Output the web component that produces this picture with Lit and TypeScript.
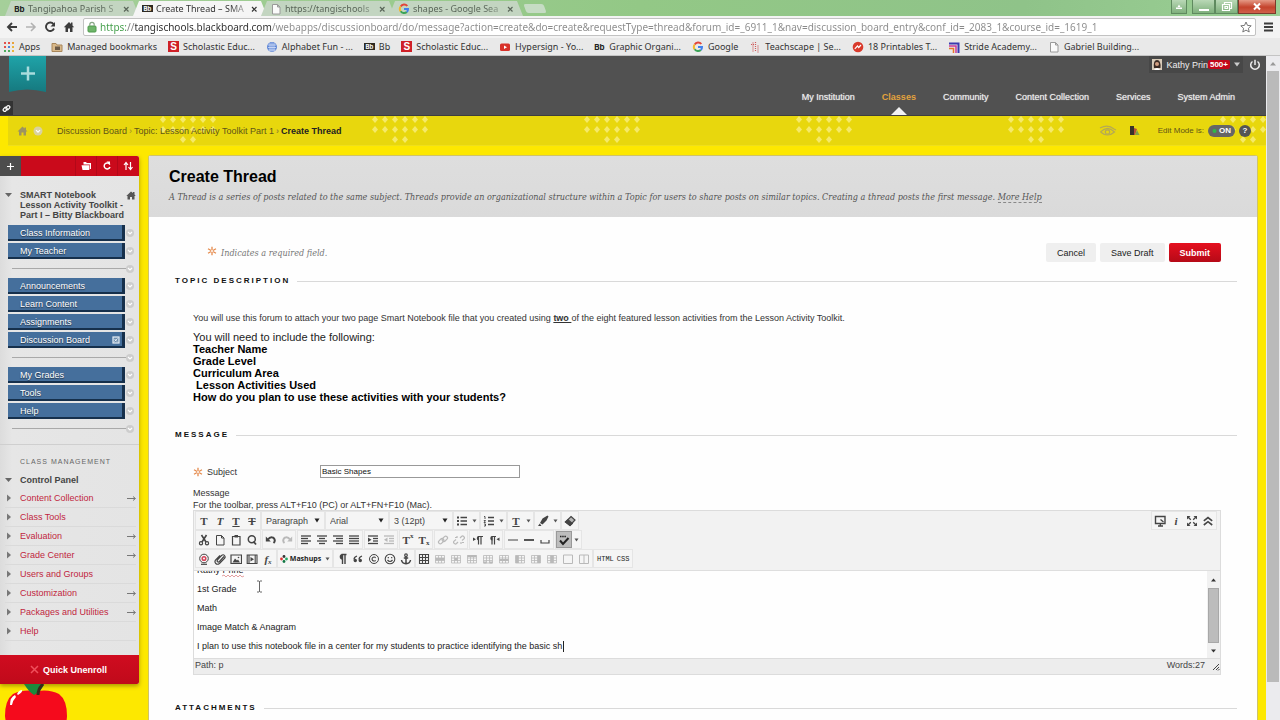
import { LitElement, html, css, svg, nothing, TemplateResult, SVGTemplateResult } from "lit";
import { customElement, property } from "lit/decorators.js";
import { classMap } from "lit/directives/class-map.js";

const S = (w: number, h: number, body: SVGTemplateResult) =>
  html`<svg width=${w} height=${h} viewBox="0 0 ${w} ${h}" fill="none" stroke="currentColor" stroke-width="1.2" aria-hidden="true">${body}</svg>`;

const lines = (rows: number[][]) =>
  svg`${rows.map((r) => svg`<path d="M${r[0]} ${r[2]}H${r[1]}" stroke-width="1.3"/>`)}`;

const page = svg`<path d="M2.5 1.5h5l2.500 2.500v7h-7.500zM7.500 1.500v2.500h2.500" stroke-width="1"/>`;
const googleG = svg`<g stroke-width="2"><path d="M9.300 3A4 4 0 0 0 2.700 3.500" stroke="#e2453a"/><path d="M2.700 3.500A4 4 0 0 0 2.700 8.300" stroke="#f4b72a"/><path d="M2.700 8.300A4 4 0 0 0 8.800 9" stroke="#3ba457"/><path d="M8.800 9A4 4 0 0 0 10 6H6" stroke="#4180ec"/></g>`;
const cells = (mark: SVGTemplateResult) =>
  svg`<g stroke-width=".8"><path d="M1.500 2.500h9v7.500h-9zM1.500 5h9M1.500 7.500h9M4.500 2.500v7.500M7.500 2.500v7.500"/></g>${mark}`;

const ICONS: Record<string, SVGTemplateResult> = {
  cut: svg`<path d="M3.500 1L8 8M8.500 1L4 8" stroke-width="1.600"/><circle cx="3" cy="9.300" r="1.600"/><circle cx="9" cy="9.300" r="1.600"/>`,
  copy: page,
  paste: svg`<path d="M2.500 2.500h7.500v8.500h-7.500z"/><path d="M4.500 1h3.500v2.500h-3.500z" fill="currentColor" stroke="none"/>`,
  find: svg`<circle cx="5.800" cy="5.300" r="3.500" stroke-width="1.500"/><path d="M7.500 7.500l2.500 3" stroke-width="1.800"/>`,
  undo: svg`<path d="M3 5.500C5 2.500 9.500 2.500 9.800 6.500Q9.800 8 8.500 9" stroke-width="2"/><path d="M.8 2.500v5h5z" fill="currentColor" stroke="none"/>`,
  redo: svg`<path d="M9 5.500C7 2.500 2.500 2.500 2.200 6.500Q2.200 8 3.500 9" stroke-width="2"/><path d="M11.200 2.500v5h-5z" fill="currentColor" stroke="none"/>`,
  left: lines([[1, 11, 2], [1, 8, 4.5], [1, 11, 7], [1, 8, 9.5]]),
  center: lines([[1, 11, 2], [3, 9, 4.5], [1, 11, 7], [3, 9, 9.5]]),
  right: lines([[1, 11, 2], [4, 11, 4.5], [1, 11, 7], [4, 11, 9.5]]),
  justify: lines([[1, 11, 2], [1, 11, 4.5], [1, 11, 7], [1, 11, 9.5]]),
  indent: svg`${lines([[1, 11, 2], [6, 11, 4.5], [6, 11, 7], [1, 11, 9.5]])}<path d="M1 3.500l3.500 2.200L1 8z" fill="currentColor" stroke="none"/>`,
  outdent: svg`${lines([[1, 11, 2], [6, 11, 4.5], [6, 11, 7], [1, 11, 9.5]])}<path d="M4.500 3.500L1 5.700 4.500 8z" fill="currentColor" stroke="none"/>`,
  link: svg`<rect x="1" y="5.500" width="6" height="3.500" rx="1.700" transform="rotate(-45 4 7)"/><rect x="5" y="3" width="6" height="3.500" rx="1.700" transform="rotate(-45 8 5)"/>`,
  unlink: svg`<path d="M5 8l-1.500 1.500a1.700 1.700 0 0 1-2.400-2.400L3 5.500M7 4l1.500-1.500a1.700 1.700 0 0 1 2.400 2.400L9 6.500M4 2v2M2 3.500h1.500M8 8v2M9 8.500h2"/>`,
  ltr: svg`<path d="M6.500 10.500v-8M9 10.500v-8M6 2.500h5"/><path d="M7 2a2.200 2.200 0 0 0 0 4.500zM1 3.500L4 5.300 1 7z" fill="currentColor" stroke="none"/>`,
  rtl: svg`<path d="M4 10.500v-8M6.500 10.500v-8M3.500 2.500h4.500"/><path d="M4.500 2a2.200 2.200 0 0 0 0 4.500zM11.500 3.500L8.500 5.300l3 1.700z" fill="currentColor" stroke="none"/>`,
  rule: svg`<path d="M1 6h10" stroke-width="1"/>`,
  thickrule: svg`<path d="M1 6h10" stroke-width="1.800"/>`,
  nbsp: svg`<path d="M2 6v3h8v-3"/>`,
  spell: svg`<path d="M2 6.500l3 3.500 5.500-6" stroke-width="2"/><path d="M2 2.500h6" stroke-width="1.500" stroke-dasharray="1.500 .7"/>`,
  ul: svg`<path d="M4.500 2.500H11M4.500 6H11M4.500 9.500H11" stroke-width="1.300"/><path d="M1 2.500h2M1 6h2M1 9.500h2" stroke-width="1.800"/>`,
  ol: svg`<path d="M5 2.500h6M5 6h6M5 9.500h6" stroke-width="1.300"/><path d="M1 1.500h1v2.500M.8 5.500h1.700L1 7.500h1.700M1 9h1.500v2H1" stroke-width=".9"/>`,
  marker: svg`<path d="M10.500 0.500L5.500 3.500l-2.500 4.500 2.500 1.500 4-4 2-4zM2.800 8.500L1 11h3.500z" fill="currentColor" stroke="none"/>`,
  eraser: svg`<path d="M7 1.500l4 3.500-5 5.500-4.500-3.500z" fill="currentColor" fill-opacity=".35"/><path d="M4 4.800l4.300 3.600L6 10.500 1.500 7z" fill="currentColor"/>`,
  webcam: svg`<circle cx="6" cy="5.500" r="4.300" stroke-width="1"/><circle cx="6" cy="5.500" r="1.800" stroke="#d6455a" stroke-width="1.500"/><path d="M3 11.300h6"/>`,
  clip: svg`<path d="M10 3.500L5.500 8.500q-1.200 1-2 .2t.2-2L7.500 2.500q1.800-1.500 3 0t0 2.800L5.500 10.500q-2.200 1.500-3.700 0t-.3-3.300L6 2.500"/>`,
  image: svg`<path d="M1 2h10.500v8.500H1z"/><path d="M2.500 9.500l2.500-4 2 2 1-1 2 3z" fill="currentColor" stroke="none"/><circle cx="8.500" cy="4.500" r=".8" fill="currentColor" stroke="none"/>`,
  media: svg`<path d="M1.200 2h9.800v8.500H1.200zM3 2v8.500M9.200 2v8.500" stroke-width="1.100"/><path d="M4.500 4l3.500 2.200-3.500 2.200z" fill="currentColor" stroke="none"/>`,
  pilcrow: svg`<path d="M6.500 11V1.500M9 11V1.500M5.500 1.500h5" stroke-width="1.400"/><path d="M6.500 1a2.800 2.800 0 0 0 0 5.600z" fill="currentColor" stroke="none"/>`,
  quote: svg`<path d="M5 3Q2 4 2 6.500M10 3Q7 4 7 6.500" stroke-width="1.300"/><circle cx="3.300" cy="7.500" r="1.700" fill="currentColor" stroke="none"/><circle cx="8.300" cy="7.500" r="1.700" fill="currentColor" stroke="none"/>`,
  copyright: svg`<circle cx="6" cy="6" r="4.500" stroke-width="1"/><path d="M7.600 4.800a2 2 0 1 0 0 2.500" stroke-width="1.100"/>`,
  smile: svg`<circle cx="6" cy="6" r="4.800" stroke-width="1.100"/><path d="M3.500 7q2.500 3 5 0M4.300 4v1.300M7.700 4v1.300"/>`,
  anchor: svg`<circle cx="6" cy="2.200" r="1.300"/><path d="M6 3.500v7M3.800 5h4.400M1.500 7q.5 3.500 4.500 3.700 4-.2 4.500-3.700" stroke-width="1.500"/>`,
  table: svg`<path d="M1.500 1.500h9v9h-9zM1.500 4.500h9M1.500 7.500h9M4.500 1.500v9M7.500 1.500v9" stroke-width="1.100"/>`,
  t1: cells(svg`<path d="M1.500 6.200h9" stroke-width="2.500"/>`),
  t2: cells(svg`<path d="M4.500 6.200h3" stroke-width="2.500"/>`),
  t3: cells(svg`<path d="M1.500 3h9" stroke-width="2"/>`),
  t4: cells(svg`<path d="M1.500 9.500h3m3 0h3" stroke-width="2"/>`),
  t5: cells(svg`<path d="M1.500 7h9" stroke-width="2"/>`),
  t6: cells(svg`<path d="M3 2.500v7.500" stroke-width="2.500"/>`),
  t7: cells(svg`<path d="M9 2.500v7.500" stroke-width="2.500"/>`),
  t8: cells(svg`<path d="M6 2.500v7.500" stroke-width="2.500"/>`),
  t9: svg`<path d="M1.500 2h9v8.500h-9z" stroke-width="1"/>`,
  t10: svg`<path d="M1.500 2h9v8.500h-9zM6 2v8.500" stroke-width="1"/>`,
  preview: svg`<path d="M1.500 1.500h9.500v7H1.500z" stroke-width="1.400"/><path d="M4 11h5M6.300 8.500v2.500M6.500 4.500l3 2.500" stroke-width="1.300"/>`,
  full: svg`<path d="M4.800 4.800L2 2M7.200 4.800L10 2M4.800 7.200L2 10M7.200 7.200L10 10" stroke-width="1.300"/><path d="M1 1h3.500L1 4.500zM11 1v3.500L7.500 1zM1 11V7.500L4.500 11zM11 11H7.500L11 7.500z" fill="currentColor" stroke="none"/>`,
  collapse: svg`<path d="M1.800 5.800L6 2.500l4.200 3.300M1.800 10L6 6.700 10.200 10" stroke-width="1.600"/>`,
};
const icon = (n: string) => S(12, 12, ICONS[n]);
const caret = html`<svg width="5" height="4" viewBox="0 0 5 4" aria-hidden="true"><path d="M.5.500h4L2.500 3.500z" fill="#555"/></svg>`;

const FAV: Record<string, TemplateResult> = {
  bb: html`<b class="bb">Bb</b>`,
  bbox: html`<b class="bbox">Bb</b>`,
  page: S(12, 12, svg`<g stroke="#9a9a9a" fill="#fafafa">${page}</g>`),
  g: S(12, 12, googleG),
  apps: S(12, 12, svg`<g stroke="none">${[0, 1, 2].map((r) => [0, 1, 2].map((c) => svg`<rect x=${1 + c * 4} y=${1 + r * 4} width="2" height="2" fill=${["#e2504a", "#e2504a", "#e8a23a", "#e2504a", "#4a84d8", "#e8b53a", "#4cab5c", "#4cab5c", "#e8b53a"][r * 3 + c]}/>`))}</g>`),
  folder: S(12, 12, svg`<path d="M1 2.500h4l1 1.500h5v6.500H1z" fill="#d9b98a" stroke="#a8865a" stroke-width="1"/><rect x="4" y="5.500" width="5" height="3.500" fill="#6b5a48" stroke="none"/>`),
  s: html`<b class="sch">S</b>`,
  globe: S(12, 12, svg`<circle cx="6" cy="6" r="5" fill="#5e86d6" stroke="none"/><path d="M2 4h8M2 6.500h8M2.500 9h7M4 2v8M6 1.500v9M8 2v8" stroke="#dfe8fa" stroke-width=".7"/>`),
  tube: S(12, 12, svg`<rect x="1" y="2.500" width="10" height="7.500" rx="1.500" fill="#d8322a" stroke="none"/><path d="M5 4.500l3 1.700L5 8z" fill="#fff" stroke="none"/>`),
  teach: S(12, 12, svg`<g stroke="#d05a5a" stroke-width="1.200" stroke-dasharray="1 1"><path d="M2 3.500h5M4 1.500v10M6.500 1v10M9 4.500v7"/></g>`),
  print: S(12, 12, svg`<circle cx="6" cy="6" r="5.300" fill="#d93a2c" stroke="none"/><path d="M2.800 7.800L5.500 5l1.200 1.500L9 4" stroke="#fff"/>`),
  stride: S(12, 12, svg`<path d="M1 2.500h9.500V12" stroke="#3a3ab0" stroke-width="2"/><path d="M1 5h7v7" stroke="#c83a9a" stroke-width="1.500"/><path d="M1 7.500h4.500V12" stroke="#e8772a" stroke-width="1.500"/>`),
};

type Tab = { fav: string; label: string; active?: boolean };

@customElement("browser-chrome")
class BrowserChrome extends LitElement {
  static styles = css`
    :host { display: block; font: 10px/12px "Noto Sans", "Open Sans", sans-serif; color: #3c3c3c; }
    button { font: inherit; color: inherit; border: 0; background: none; padding: 0; display: flex; align-items: center; justify-content: center; }
    svg { flex: none; display: block; }
    .strip { display: flex; height: 16px; background: linear-gradient(90deg, #a5cf9a, #93c886 50%, #8fc389 80%, #9bcf95); padding-left: 5px; font-size: 9px; }
    .tabs { display: flex; flex: 1; }
    .tab { display: flex; align-items: center; width: 134px; margin-right: -6px; padding: 1px 9px 0 9px; gap: 3px; background: #c3d5c1; color: #5a6659; clip-path: polygon(0 100%, 6px 1px, calc(100% - 6px) 1px, 100% 100%); box-sizing: border-box; }
    .tab.active { background: #f5f5f5; color: #333; position: relative; }
    .tab span { flex: 1; white-space: nowrap; text-align: left; mask-image: linear-gradient(90deg, #000 80%, rgba(0, 0, 0, .3)); }
    .newtab { width: 20px; height: 9px; margin: 4px 0 0 8px; background: #c6dcc4; border-radius: 2px; transform: skewX(20deg); }
    .wins { display: flex; height: 14px; gap: 0; margin-right: 4px; color: #fff; }
    .wins button { width: 23px; border: 1px solid #5f8a5f; border-top: 0; box-sizing: border-box; background: linear-gradient(#b9d8b6, #7fb07c); }
    .wins .user { width: 16px; margin-right: 5px; }
    .wins .close { width: 38px; background: linear-gradient(#e59a86, #c4432c 55%, #d0604a); border-color: #7c3a2c; }
    .bar { display: flex; align-items: center; height: 22px; background: #f3f3f3; padding: 0 5px; gap: 6px; }
    .bar button { width: 13px; height: 14px; }
    .dim { opacity: .35; }
    .omni { display: flex; flex: 1; align-items: center; height: 18px; box-sizing: border-box; border: 1px solid #c2c2c2; border-radius: 2px; background: #fff; padding: 0 3px; gap: 3px; margin-left: 2px; }
    .omni input { flex: 1; min-width: 0; border: 0; outline: 0; padding: 0; height: 15px; font: inherit; color: transparent; background: linear-gradient(90deg, #3f9c46 0 26px, #777 26px 35px, #2b2b2b 35px 172px, #8a8a8a 172px); -webkit-background-clip: text; background-clip: text; }
    .marks { display: flex; align-items: center; height: 18px; box-sizing: border-box; background: #e9e9e9; border-bottom: 1px solid #c4c4c4; padding-left: 3px; gap: 11px; font-size: 9px; }
    .marks a { display: flex; align-items: center; gap: 4px; color: #333; text-decoration: none; white-space: nowrap; }
    .bb { font: 700 8px/12px "Inter", sans-serif; color: #222; width: 11px; }
    .bbox { font: 700 6px/7px "Inter", sans-serif; color: #fff; background: #2e2a22; padding: 0 1px; width: 9px; text-align: center; }
    .sch { font: 700 10px/11px "Liberation Sans", sans-serif; color: #fff; background: #cf2027; width: 11px; text-align: center; }
  `;
  tabs: Tab[] = [
    { fav: "bb", label: "Tangipahoa Parish S" },
    { fav: "bbox", label: "Create Thread – SMA", active: true },
    { fav: "page", label: "https://tangischools" },
    { fav: "g", label: "shapes - Google Sea" },
  ];
  marks = [
    ["apps", "Apps"], ["folder", "Managed bookmarks"], ["s", "Scholastic Educ..."], ["globe", "Alphabet Fun - ..."], ["bbox", "Bb"],
    ["s", "Scholastic Educ..."], ["tube", "Hypersign - Yo..."], ["bb", "Graphic Organi..."], ["g", "Google"], ["teach", "Teachscape | Se..."],
    ["print", "18 Printables T..."], ["stride", "Stride Academy..."], ["page", "Gabriel Building..."],
  ];
  render() {
    return html`
      <div class="strip">
        <div class="tabs">
          ${this.tabs.map((t) => html`<button class=${classMap({ tab: true, active: !!t.active })}>${FAV[t.fav]}<span>${t.label}</span>${S(8, 8, svg`<path d="M2 2l4.500 4.500M6.500 2L2 6.500"/>`)}</button>`)}
          <button class="newtab" aria-label="New tab"></button>
        </div>
        <div class="wins">
          <button class="user" aria-label="User">${S(8, 8, svg`<path d="M2.500 4L4 1.500 5.500 4zM1 4.500h6v1.500H1z" fill="#fff" stroke="none"/>`)}</button>
          <button aria-label="Minimize">${S(12, 10, svg`<path d="M1 8h10" stroke-width="2"/>`)}</button>
          <button aria-label="Restore">${S(12, 11, svg`<path d="M3.500 3V1.500h7v6H9M1.500 3.500h7v6h-7zM4 5.500h2.500v2H4z"/>`)}</button>
          <button class="close" aria-label="Close">${S(10, 9, svg`<path d="M2 1.500l6 6M8 1.500l-6 6" stroke-width="2"/>`)}</button>
        </div>
      </div>
      <div class="bar">
        <button aria-label="Back">${S(12, 12, svg`<path d="M11 6H2M6 2L2 6l4 4" stroke-width="1.900"/>`)}</button>
        <button class="dim" aria-label="Forward">${S(12, 12, svg`<path d="M1 6h9M6 2l4 4-4 4" stroke-width="1.600"/>`)}</button>
        <button aria-label="Reload">${S(12, 12, svg`<path d="M9.500 3.200A4.200 4.200 0 1 0 10 7.500" stroke-width="1.900"/><path d="M11 1v4.500H6.500z" fill="currentColor" stroke="none"/>`)}</button>
        <button aria-label="Home">${S(12, 12, svg`<path d="M6 1L.8 6.300h1.700V11h2.500V7.500h2V11h2.500V6.300h1.700L9.500 4.500V1.500H8v1.500z" fill="currentColor" stroke="none"/>`)}</button>
        <div class="omni">
          ${S(10, 12, svg`<rect x="1" y="5" width="8" height="6" rx="1" fill="#6fb56a" stroke="#4f9a4c" stroke-width="1"/><path d="M2.800 5V3.500a2.200 2.200 0 0 1 4.400 0V5" stroke="#8aa888"/>`)}
          <input aria-label="Address" .value=${"https://tangischools.blackboard.com/webapps/discussionboard/do/message?action=create&do=create&requestType=thread&forum_id=_6911_1&nav=discussion_board_entry&conf_id=_2083_1&course_id=_1619_1"} />
          ${S(12, 12, svg`<path d="M6 1l1.500 3.400 3.700.4-2.800 2.500.8 3.700L6 9.100 2.800 11l.8-3.700L.8 4.800l3.700-.4z" stroke="#777" stroke-width="1"/>`)}
        </div>
        <button aria-label="Menu">${S(11, 12, svg`<path d="M1 2.500h9M1 6h9M1 9.500h9" stroke-width="2"/>`)}</button>
      </div>
      <nav class="marks">${this.marks.map(([f, l]) => html`<a href="#">${FAV[f]}${l}</a>`)}</nav>
    `;
  }
}

@customElement("course-menu")
class CourseMenu extends LitElement {
  static styles = css`
    :host { display: flex; flex-direction: column; background: linear-gradient(90deg, #dcdcdc, #e6e6e6 12px, #e4e4e4); box-shadow: 0 2px 4px rgba(90, 70, 0, .5); border-radius: 0 2px 2px 0; overflow: hidden; font: 9px/10px "Liberation Sans", sans-serif; }
    button { font: inherit; color: inherit; border: 0; background: none; padding: 0; display: flex; align-items: center; justify-content: center; }
    svg { display: block; flex: none; }
    a { text-decoration: none; color: inherit; }
    .top { display: flex; height: 20px; background: #ca0a1b; color: #fff; padding-right: 1px; }
    .top button { width: 21px; border-left: 1px solid #b30818; }
    .top .add { background: #4d4d4d; border: 0; margin-right: auto; }
    .title { display: flex; align-items: flex-start; padding: 14px 3px 5px 5px; gap: 6px; color: #444; }
    .title h2 { flex: 1; margin: 0; font: 700 9px/10px "Liberation Sans", sans-serif; padding-left: 2px; white-space: nowrap; }
    .title svg { margin-top: 1px; }
    .title svg:last-child { margin-left: -10px; }
    .list { display: flex; flex-direction: column; gap: 2px; padding: 0 5px 0 8px; }
    .row { display: flex; align-items: center; justify-content: space-between; height: 16px; }
    .row a { display: flex; align-items: center; justify-content: space-between; width: 117px; height: 16px; box-sizing: border-box; background: #456f9c; border: solid #16304c; border-width: 0 3px 2px 0; color: #fff; padding: 1px 2px 0 12px; text-shadow: 0 1px 1px #234; }
    .row.div { height: 15px; }
    .row.div hr { flex: 1; border: 0; border-top: 1px solid #a9a9a9; margin: 0 0 0 4px; }
    .row button { width: 8px; height: 8px; border-radius: 4px; background: #cdcdcd; color: #fff; }
    .mgmt { margin-top: 8px; border-top: 1px solid #cfcfcf; padding: 12px 3px 0 5px; }
    .mgmt h3 { margin: 0 0 0 15px; font: 7px/10px "Liberation Sans", sans-serif; letter-spacing: 1px; color: #666; white-space: nowrap; }
    .item { display: flex; align-items: center; height: 18px; border-bottom: 1px solid #dadada; color: #c11f40; gap: 8px; }
    .item a { flex: 1; }
    .item.head { color: #444; font-weight: 700; border: 0; margin-top: 4px; }
    .quit { margin-top: 14px; height: 29px; background: linear-gradient(#d00c20, #c00a1a); color: #fff; font-weight: 700; gap: 4px; padding-right: 2px; }
  `;
  groups = [["Class Information", "My Teacher"], ["Announcements", "Learn Content", "Assignments", "Discussion Board"], ["My Grades", "Tools", "Help"]];
  items: [string, boolean][] = [["Content Collection", true], ["Class Tools", false], ["Evaluation", true], ["Grade Center", true], ["Users and Groups", false], ["Customization", true], ["Packages and Utilities", true], ["Help", false]];
  render() {
    const more = html`<button aria-label="Options">${S(8, 8, svg`<path d="M2 3l2 2 2-2"/>`)}</button>`;
    const down = S(7, 8, svg`<path d="M0 2h7L3.500 6z" fill="#666" stroke="none"/>`);
    return html`
      <div class="top">
        <button class="add" aria-label="Add">${S(9, 9, svg`<path d="M1 4.500h7M4.500 1v7"/>`)}</button>
        <button aria-label="Folder view">${S(11, 10, svg`<path d="M2.500 1h2.500l.800 1H10v6H8.800V3.500H2.500z" fill="currentColor" stroke="none"/><path d="M.5 4.200h7.800v4.800H1.500z" fill="currentColor" stroke="none"/>`)}</button>
        <button aria-label="Refresh">${S(10, 10, svg`<path d="M7.800 3.500A3 3 0 1 0 8 6" stroke-width="1.500"/><path d="M4.500.500h3.500v3.500z" fill="currentColor" stroke="none"/>`)}</button>
        <button aria-label="Reorder">${S(10, 10, svg`<path d="M3 9V2M1 4l2-2.500L5 4M7.500 1v7M5.500 6l2 2.500 2-2.500"/>`)}</button>
      </div>
      <div class="title">${down}<h2>SMART Notebook<br />Lesson Activity Toolkit -<br />Part I – Bitty Blackboard</h2>
        ${S(10, 9, svg`<path d="M5 .5L.3 5H1.500v3.500h2.500V6h2v2.500h2.500V5h1.200L8.500 3.500V1H7v1z" fill="#555" stroke="none"/>`)}</div>
      <div class="list">
        ${this.groups.map((g) => html`
          ${g.map((l) => html`<div class="row"><a href="#">${l}${l === "Discussion Board" ? S(8, 8, svg`<rect x="1" y="1" width="6" height="6" fill="#6f8fae" stroke="#e8eef5"/><path d="M2.500 5.500l3-3M2.500 3l2.500 2.500" stroke="#fff" stroke-width=".8"/>`) : nothing}</a>${more}</div>`)}
          <div class="row div"><hr />${more}</div>`)}
      </div>
      <div class="mgmt">
        <h3>CLASS MANAGEMENT</h3>
        <div class="item head">${down}<span>Control Panel</span></div>
        ${this.items.map(([l, arrow]) => html`<div class="item">${S(7, 8, svg`<path d="M2 .500v7L6 4z" fill="#777" stroke="none"/>`)}<a href="#">${l}</a>${arrow ? S(9, 7, svg`<path d="M0 3.500h8M6 1.500l2.500 2L6 5.500" stroke="#777" stroke-width="1"/>`) : nothing}</div>`)}
      </div>
      <button class="quit">${S(9, 9, svg`<path d="M1 1l7 7M8 1L1 8" stroke="#f0505c" stroke-width="1.500"/>`)}Quick Unenroll</button>
    `;
  }
}

@customElement("rich-editor")
class RichEditor extends LitElement {
  static styles = css`
    :host { display: block; border: 1px solid #dcdcdc; background: #f2f2f2; font: 9px/12px "Liberation Sans", sans-serif; color: #444; }
    button, select { font: inherit; color: inherit; border: 0; background: none; padding: 0; margin: 0; }
    button { display: flex; align-items: center; justify-content: center; width: 16px; height: 17px; }
    svg { display: block; flex: none; }
    .tools { display: flex; justify-content: space-between; padding: 0 4px 2px 2px; border-bottom: 1px solid #dedede; }
    .line { display: flex; gap: 2px; height: 19px; align-items: center; }
    .line.wide { gap: 3px; }
    .grp { display: flex; align-items: center; height: 17px; box-shadow: 0 0 0 1px #e5e5e5; background: #f5f5f5; }
    .T { font: 700 11px/12px "Liberation Serif", serif; }
    .i { font-style: italic; } .u { text-decoration: underline; } .s { text-decoration: line-through; }
    sup, sub { font-size: 7px; line-height: 6px; }
    sup { align-self: flex-start; margin-top: 2px; }
    sub { align-self: flex-end; margin-bottom: 2px; }
    .off { color: #b9b9b9; }
    .arr { width: 9px; }
    .pick { display: flex; align-items: center; width: 62px; height: 17px; position: relative; }
    .pick select { appearance: none; width: 100%; height: 17px; padding-left: 4px; }
    .pick svg { position: absolute; right: 4px; pointer-events: none; }
    .on { background: #bdbdbd; box-shadow: inset 0 0 0 1px #999; color: #222; }
    .mash { width: 45px; gap: 2px; font: 700 7px/12px "Open Sans", sans-serif; color: #222; }
    .code { width: auto; padding: 0 3px; font: 7px/12px "Liberation Mono", monospace; color: #222; }
    .code + .code { padding-left: 0; }
    .body { display: flex; position: relative; height: 87px; background: #fefefe; }
    textarea { flex: 1; resize: none; border: 0; outline: 0; margin: 0; padding: 0 3px 2px; font: 9px/19px "Liberation Sans", sans-serif; color: #222; background: none; overflow-y: scroll; scrollbar-width: none; }
    .wave { position: absolute; left: 28px; top: 3px; }
    .beam { position: absolute; left: 62px; top: 9px; }
    .cursor { position: absolute; left: 369px; bottom: 6px; width: 1px; height: 11px; background: #222; }
    .bar { display: flex; flex-direction: column; width: 13px; background: #f1f1f1; }
    .bar .thumb { flex: 1; margin: 0 1px; background: #bcbcbc; border: 1px solid #a8a8a8; }
    .bar button { width: 13px; height: 17px; }
    .bar button:last-child { height: 15px; }
    .status { display: flex; justify-content: space-between; align-items: flex-start; height: 15px; border-top: 1px solid #dcdcdc; background: #ededed; padding: 0 0 0 1px; }
    .status span:last-child { display: flex; align-items: flex-end; gap: 7px; }
  `;
  text = "Kathy Prine\n1st Grade\nMath\nImage Match & Anagram\nI plan to use this notebook file in a center for my students to practice identifying the basic sh";
  firstUpdated() {
    const t = this.renderRoot.querySelector("textarea")!;
    t.scrollTop = t.scrollHeight;
  }
  btn(n: string, off = false) {
    return html`<button class=${off ? "off" : ""} aria-label=${n}>${icon(n)}</button>`;
  }
  set(names: string, off = false) {
    return html`<div class="grp">${names.split(" ").map((n) => this.btn(n, off))}</div>`;
  }
  drop(content: unknown, label: string) {
    return html`<div class="grp"><button aria-label=${label}>${content}</button><button class="arr" aria-label="${label} options">${caret}</button></div>`;
  }
  pick(label: string) {
    return html`<div class="grp pick"><select aria-label=${label}><option>${label}</option></select><svg width="6" height="5" viewBox="0 0 6 5" aria-hidden="true"><path d="M.5.500h5L3 4.500z" fill="#222"/></svg></div>`;
  }
  render() {
    return html`
      <div class="tools">
        <div>
          <div class="line">
            <div class="grp">${["", "i", "u", "s"].map((c) => html`<button class="T ${c}">T</button>`)}</div>
            ${["Paragraph", "Arial", "3 (12pt)"].map((p) => this.pick(p))}
            ${this.drop(icon("ul"), "Bullets")}${this.drop(icon("ol"), "Numbers")}
            ${this.drop(html`<span class="T u">T</span>`, "Text color")}${this.drop(icon("marker"), "Highlight")}${this.set("eraser")}
          </div>
          <div class="line wide">
            ${this.set("cut copy paste find")}
            <div class="grp">${this.btn("undo")}${this.btn("redo", true)}</div>
            ${this.set("left center right justify")}
            <div class="grp">${this.btn("indent")}${this.btn("outdent", true)}</div>
            <div class="grp"><button class="T">T<sup>x</sup></button><button class="T">T<sub>x</sub></button></div>
            ${this.set("link unlink", true)}${this.set("ltr rtl")}${this.set("rule thickrule nbsp")}
            <div class="grp"><button class="on" aria-label="Spelling">${icon("spell")}</button><button class="arr" aria-label="Spelling options">${caret}</button></div>
          </div>
          <div class="line">
            <div class="grp">${["webcam", "clip", "image", "media"].map((n) => this.btn(n))}<button class="T i">f<sub>x</sub></button></div>
            <div class="grp"><button class="mash">${S(8, 8, svg`<g stroke="none"><circle cx="4" cy="1.500" r="1.400" fill="#333"/><circle cx="1.500" cy="4" r="1.400" fill="#d33"/><circle cx="6.500" cy="4" r="1.400" fill="#2a6"/><circle cx="4" cy="6.500" r="1.400" fill="#174"/></g>`)}Mashups</button><button class="arr" aria-label="Mashup options">${caret}</button></div>
            ${this.set("pilcrow quote copyright smile anchor")}
            <div class="grp">${this.btn("table")}${["t1", "t2", "t3", "t4", "t5", "t6", "t7", "t8", "t9", "t10"].map((n) => this.btn(n, true))}</div>
            <div class="grp"><button class="code">HTML</button><button class="code">CSS</button></div>
          </div>
        </div>
        <div class="line"><div class="grp">${this.btn("preview")}<button class="T i">i</button>${this.btn("full")}${this.btn("collapse")}</div></div>
      </div>
      <div class="body">
        <textarea aria-label="Message" .value=${this.text}></textarea>
        <svg class="wave" width="22" height="4" viewBox="0 0 22 4" aria-hidden="true"><path d="M0 2l2-1 2 2 2-2 2 2 2-2 2 2 2-2 2 2 2-2 2 2 2-1" fill="none" stroke="#d88" stroke-width=".8"/></svg>
        <svg class="beam" width="7" height="13" viewBox="0 0 7 13" aria-hidden="true"><path d="M1 1h2l.5.500.5-.5h2M3.500 1.500v10M1 12h2l.5-.5.500.5h2" fill="none" stroke="#555" stroke-width=".9"/></svg>
        <span class="cursor"></span>
        <div class="bar">
          <button aria-label="Scroll up">${S(7, 6, svg`<path d="M1 4.500h5L3.500 1.500z" fill="#333" stroke="none"/>`)}</button>
          <div class="thumb"></div>
          <button aria-label="Scroll down">${S(7, 6, svg`<path d="M1 1.500h5L3.500 4.500z" fill="#333" stroke="none"/>`)}</button>
        </div>
      </div>
      <div class="status"><span>Path: p</span><span>Words:27 ${S(8, 9, svg`<path d="M1 8l6-6M4 8l3-3M6 8.500l1.500-1.500" stroke-width="1"/>`)}</span></div>
    `;
  }
}

@customElement("section-head")
class SectionHead extends LitElement {
  static styles = css`
    :host { display: flex; align-items: center; gap: 7px; height: 12px; }
    h2 { margin: 0; font: 700 8px/12px "Liberation Sans", sans-serif; letter-spacing: 2px; color: #111; }
    hr { flex: 1; margin: 0; border: 0; border-top: 1px solid #d9d9d9; }
  `;
  @property() label = "";
  render() {
    return html`<h2>${this.label}</h2><hr />`;
  }
}

const star = S(10, 10, svg`<path d="M5 .8v8.400M1 2.800l8 4.400M9 2.800L1 7.200" stroke="#e58a4c" stroke-width="1.300"/><circle cx="5" cy="5" r="1" fill="#fff" stroke="none"/>`);

@customElement("app-root")
class AppRoot extends LitElement {
  static styles = css`
    :host { display: flex; flex-direction: column; height: 100vh; overflow: hidden; font: 9px/12px "Liberation Sans", Arial, sans-serif; color: #333; background: #fde800; }
    button, input { font: inherit; color: inherit; }
    button { border: 0; padding: 0; background: none; }
    svg { display: block; flex: none; }
    a { color: inherit; text-decoration: none; }
    browser-chrome { flex: none; }
    .frame { display: flex; flex: 1; min-height: 0; }
    .page { flex: 1; min-width: 0; overflow: hidden; }
    .scroll { display: flex; flex-direction: column; width: 14px; background: #ebebee; align-items: center; }
    .scroll button { height: 15px; }
    .scroll .thumb { width: 12px; flex: 0 0 92%; background: #bababa; }
    header { display: flex; justify-content: space-between; height: 59px; background: #515151; border-bottom: 1px solid #3e3e3e; color: #eee; }
    .brand { display: flex; flex-direction: column; justify-content: space-between; }
    .plus { margin-left: 9px; }
    .chain { width: 13px; height: 14px; background: #333; display: flex; align-items: center; justify-content: center; }
    .hright { display: flex; flex-direction: column; align-items: flex-end; justify-content: space-between; }
    .user { display: flex; align-items: center; height: 17px; gap: 4px; padding-right: 5px; }
    .who { display: flex; align-items: center; height: 17px; gap: 4px; background: #474747; padding: 0 3px; margin-right: 2px; }
    .badge { background: #c3081a; color: #fff; border-radius: 2px; font: 700 8px/9px "Liberation Sans", sans-serif; padding: 0 2px; margin-left: -4px; }
    .nav { display: flex; gap: 27px; padding-right: 31px; }
    .nav a { display: flex; flex-direction: column; align-items: center; height: 24px; justify-content: space-between; text-shadow: 0 0 1px #ccc; }
    .nav .cur { color: #e3a33d; font-weight: 700; text-shadow: none; }
    .crumbs { display: flex; align-items: center; height: 30px; margin-left: 8px; background: #e8d70d; position: relative; padding-left: 9px; border-bottom: 1px solid #efdf1c; box-sizing: border-box; color: #5f5518; }
    .dots { position: absolute; inset: 0; width: 100%; height: 100%; }
    .crumbs > :not(.dots) { position: relative; }
    .crumbs ol { display: flex; gap: 2px; margin: 0 auto 0 14px; padding: 0; list-style: none; }
    .crumbs li + li::before { content: "›"; margin-right: 2px; color: #9c8f2a; }
    .crumbs .here { color: #222; font-weight: 700; }
    .ic { display: flex; gap: 5px; }
    .right { display: flex; align-items: center; padding-right: 15px; gap: 4px; font-size: 8px; }
    .right .eye { margin-right: 8px; }
    .right .pal { margin-right: 14px; }
    .on { background: #666; color: #fff; border-radius: 6px; height: 12px; padding: 0 4px; display: flex; align-items: center; gap: 2px; font-weight: 700; font-size: 8px; }
    .help { width: 12px; height: 12px; border-radius: 6px; background: #555; color: #fff; font-weight: 700; line-height: 12px; }
    .cols { display: flex; align-items: flex-start; gap: 10px; padding: 9px 8px 0 0; }
    .side { width: 139px; flex: none; padding-top: 1px; }
    .apple { margin-left: 4px; }
    main { flex: 1; min-width: 0; background: #fefefe; border: 1px solid #cfc36a; border-bottom: 0; border-radius: 3px 3px 0 0; margin-left: -1px; box-sizing: border-box; min-height: 640px; }
    .head { background: linear-gradient(#dedede, #dadada); padding: 11px 20px 0; height: 50px; }
    h1 { margin: 0; font: 700 16px/19px "Liberation Sans", sans-serif; color: #000; }
    .serif { font: italic 9px/14px "DejaVu Serif Condensed", "DejaVu Serif", serif; color: #555; margin: 0; }
    .head .serif { padding-top: 4px; }
    .serif a { border-bottom: 1px dashed #888; }
    .content { padding: 26px 20px 0 26px; }
    .acts { display: flex; align-items: center; gap: 4px; padding: 0 16px 0 32px; }
    .acts .serif { display: flex; gap: 4px; flex: 1; color: #777; }
    .acts button { height: 19px; padding: 0 11px; background: #efefef; border-radius: 2px; color: #222; }
    .acts .go { background: linear-gradient(#e5101f, #b60a17); color: #fff; font-weight: 700; }
    .desc { padding: 25px 18px 0; }
    .desc p { margin: 0 0 7px; }
    .big { font-size: 11px; line-height: 12px; color: #222; }
    .big b { display: block; color: #000; white-space: pre; }
    section-head { margin-top: 13px; }
    .form { padding: 24px 16px 0 18px; }
    .subj { display: flex; align-items: center; height: 13px; margin-bottom: 9px; }
    .subj label { display: flex; align-items: center; gap: 4px; width: 127px; }
    .subj input { width: 200px; height: 13px; box-sizing: border-box; border: 1px solid #999; padding: 0 1px; font-size: 8px; color: #111; background: #fff; }
    .form p { margin: 0; }
    .form rich-editor { margin-top: -1px; }
    .m26 { margin-top: 26px; }
    .m27 { margin-top: 27px; }
  `;
  nav = ["My Institution", "Classes", "Community", "Content Collection", "Services", "System Admin"];
  render() {
    const dot = (c: number, r: number) => svg`<path d="M${4 + c * 10} ${r * 10}l3 3.500-3 3.500-3-3.500z" fill="#f5e968"/>`;
    return html`
      <browser-chrome></browser-chrome>
      <div class="frame">
        <div class="page">
          <header>
            <div class="brand">
              <svg class="plus" width="38" height="37" viewBox="0 0 38 37" aria-hidden="true"><defs><linearGradient id="tl" x1="0" y1="0" x2="0" y2="1"><stop offset="0" stop-color="#1fa3a8"/><stop offset="1" stop-color="#16797f"/></linearGradient></defs><path d="M0 0h37v36Q18 31 0 36z" fill="url(#tl)"/><path d="M12 17.500h14M19 10.500v14" stroke="#a9dcdd" stroke-width="2.500"/></svg>
              <div class="chain">${S(9, 9, svg`<rect x="1" y="4" width="4.500" height="3" rx="1.500" transform="rotate(-50 3 5.500)" stroke="#fff"/><rect x="3.500" y="2" width="4.500" height="3" rx="1.500" transform="rotate(-50 6 3.500)" stroke="#fff"/>`)}</div>
            </div>
            <div class="hright">
              <div class="user">
                <div class="who">
                  ${S(10, 11, svg`<rect width="10" height="11" fill="#d8cbb8" stroke="none"/><path d="M2 9Q1 1 5 1t3.500 8z" fill="#3b2a22" stroke="none"/><circle cx="5" cy="5" r="2" fill="#d29f80" stroke="none"/><path d="M2 11q3-4 6 0z" fill="#fff" stroke="none"/>`)}
                  Kathy Prin<span class="badge">500+</span>
                  <svg width="6" height="5" viewBox="0 0 6 5" aria-hidden="true"><path d="M0 .500h6L3 4.500z" fill="#ccc"/></svg>
                </div>
                <button aria-label="Log out">${S(12, 12, svg`<path d="M3.500 2.500a4.300 4.300 0 1 0 5 0M6 .8V6" stroke="#eee" stroke-width="1.500"/>`)}</button>
              </div>
              <nav class="nav">${this.nav.map((n) => html`<a href="#" class=${n === "Classes" ? "cur" : ""}>${n}${n === "Classes" ? html`<svg width="16" height="8" viewBox="0 0 16 8" aria-hidden="true"><path d="M0 8L8 0l8 8z" fill="#f2f2f2"/></svg>` : nothing}</a>`)}</nav>
            </div>
          </header>
          <div class="crumbs">
            <svg class="dots" aria-hidden="true"><defs><pattern id="pd" x="151" y="0" width="212" height="30" patternUnits="userSpaceOnUse">${[0, 1, 2, 3, 4, 5].map((c) => svg`${dot(c, 0)}${dot(c, 1)}`)}${dot(2, 2)}${dot(3, 2)}</pattern></defs><rect width="100%" height="100%" fill="url(#pd)"/></svg>
            <div class="ic">
              ${S(11, 10, svg`<path d="M5.500.500L.5 5.500h1.500V9.500h2.500V6.500h2v3h2.500V5.500h1.500L9 4V1.500H7.500v1z" fill="#9d9460" stroke="none"/>`)}
              ${S(10, 10, svg`<circle cx="5" cy="5" r="4.500" fill="#d9d2a0" stroke="none"/><path d="M3 4.200l2 2 2-2" stroke="#fff"/>`)}
            </div>
            <ol><li><a href="#">Discussion Board</a></li><li><a href="#">Topic: Lesson Activity Toolkit Part 1</a></li><li class="here">Create Thread</li></ol>
            <div class="right">
              <span class="eye">${S(18, 12, svg`<path d="M1 3q8-4 14 1l2 1M1.500 7q7-7 14 0-7 6-14 0" stroke="#b5a955"/><circle cx="8.500" cy="7" r="2.200" stroke="#b5a955"/>`)}</span>
              <span class="pal">${S(11, 11, svg`<g stroke="none"><path d="M1 1h4v9H1z" fill="#3a332a"/><path d="M5 3l3 1-2 6H5z" fill="#b5503a"/><path d="M8 5l2.500 5H6z" fill="#7fa04a"/></g>`)}</span>
              Edit Mode is: <button class="on">${S(5, 6, svg`<circle cx="2.500" cy="3" r="2" fill="#2fb84a" stroke="none"/>`)}ON</button>
              <button class="help" aria-label="Help">?</button>
            </div>
          </div>
          <div class="cols">
            <div class="side">
              <course-menu></course-menu>
              <svg class="apple" width="66" height="60" viewBox="0 0 66 60" aria-hidden="true"><path d="M33 7Q18 5 9 10 1 16 1 32q2 24 32 28 29-4 30-28 0-16-8-22-9-5-22-3z" fill="#f50a1c"/><path d="M20 0h20q-2 7-10 11-5-3-10-11z" fill="#1c8a3c"/><path d="M34 11q0-6 5-11" stroke="#3a2a1a" stroke-width="3" fill="none"/><path d="M6 21q0-8 5-10l1 2q-3 3-4 8zM13 10q2-4 5-4 1 2-4 5z" fill="#fff"/></svg>
            </div>
            <main>
              <div class="head">
                <h1>Create Thread</h1>
                <p class="serif">A Thread is a series of posts related to the same subject. Threads provide an organizational structure within a Topic for users to share posts on similar topics. Creating a thread posts the first message. <a href="#">More Help</a></p>
              </div>
              <div class="content">
                <div class="acts"><p class="serif">${star} Indicates a required field.</p><button>Cancel</button><button>Save Draft</button><button class="go">Submit</button></div>
                <section-head label="TOPIC DESCRIPTION"></section-head>
                <div class="desc">
                  <p>You will use this forum to attach your two page Smart Notebook file that you created using <b><u>two </u></b>of the eight featured lesson activities from the Lesson Activity Toolkit.</p>
                  <div class="big">You will need to include the following:<b>Teacher Name</b><b>Grade Level</b><b>Curriculum Area</b><b> Lesson Activities Used</b><b>How do you plan to use these activities with your students?</b></div>
                </div>
                <section-head class="m26" label="MESSAGE"></section-head>
                <div class="form">
                  <div class="subj"><label for="subject">${star} Subject</label><input id="subject" .value=${"Basic Shapes"} /></div>
                  <p>Message</p>
                  <p>For the toolbar, press ALT+F10 (PC) or ALT+FN+F10 (Mac).</p>
                  <rich-editor></rich-editor>
                </div>
                <section-head class="m27" label="ATTACHMENTS"></section-head>
              </div>
            </main>
          </div>
        </div>
        <div class="scroll">
          <button aria-label="Scroll up">${S(8, 15, svg`<path d="M1 9.500h6L4 6z" fill="#999" stroke="none"/>`)}</button>
          <div class="thumb"></div>
        </div>
      </div>
    `;
  }
}
